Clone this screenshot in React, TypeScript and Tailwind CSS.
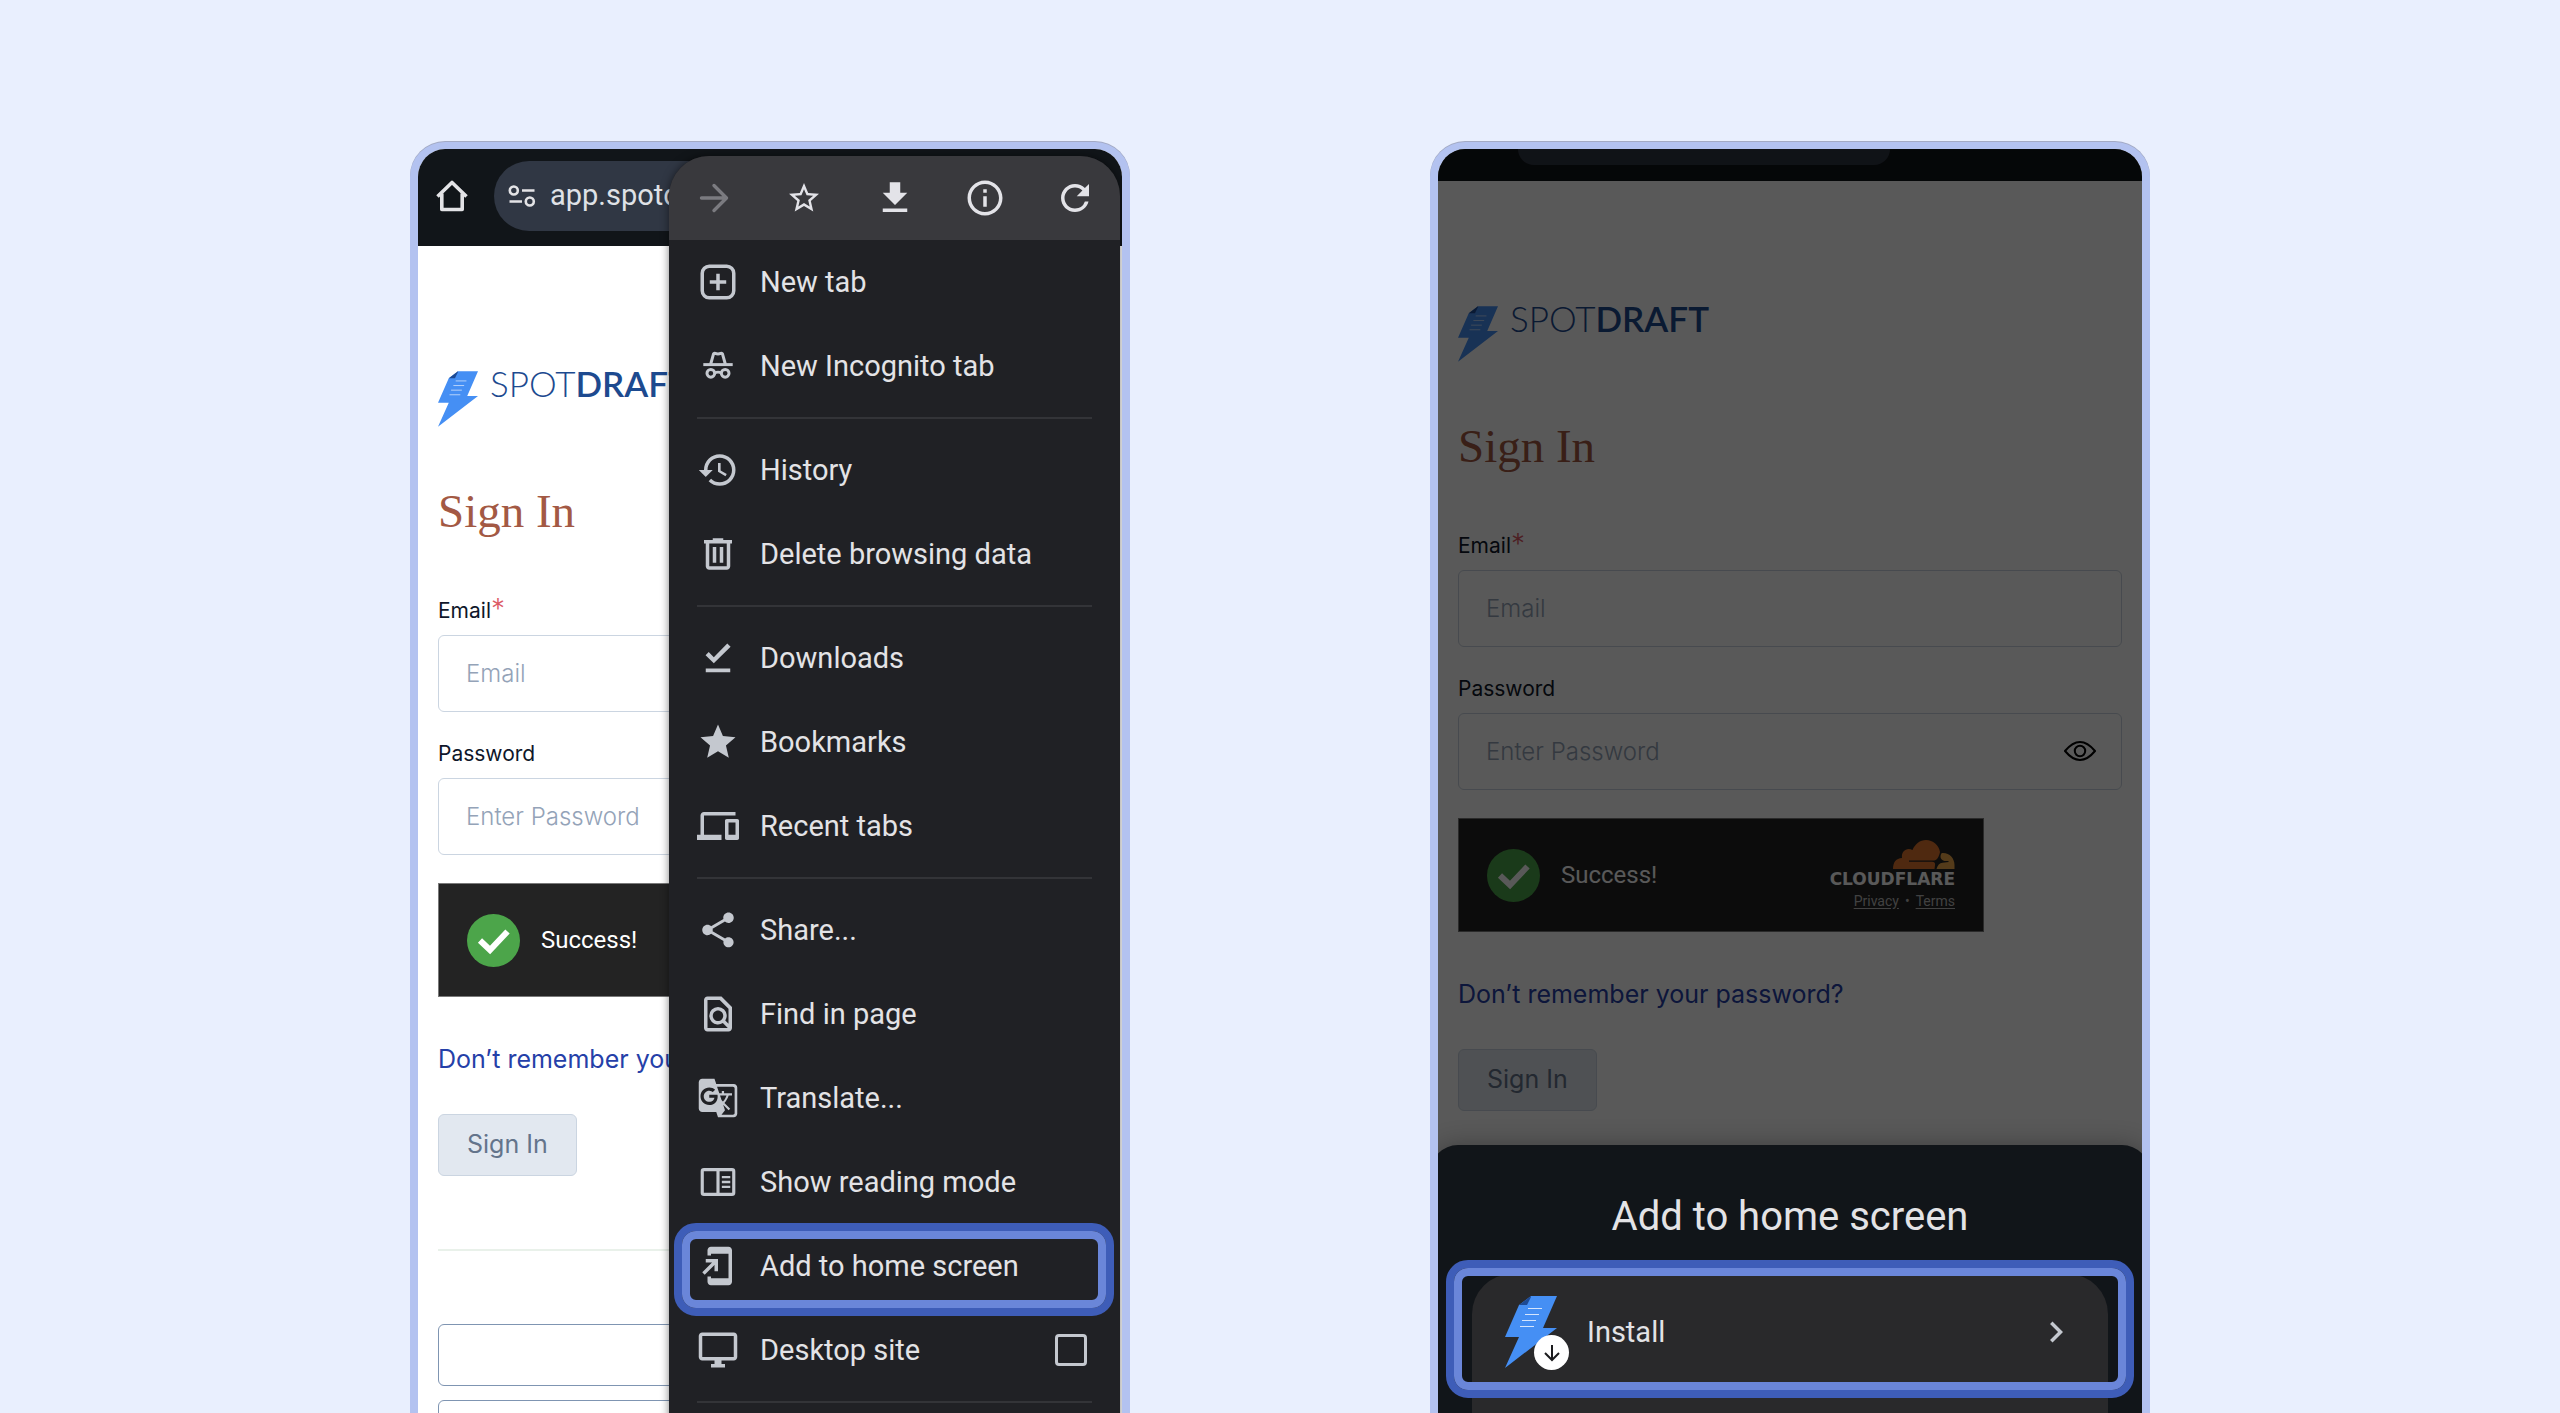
import type { ReactNode } from "react";
import {
  MdAddToHomeScreen,
  MdChevronRight,
  MdDevices,
  MdDownload,
  MdGTranslate,
  MdHistory,
  MdInfoOutline,
  MdOutlineDesktopWindows,
  MdOutlineFindInPage,
  MdRefresh,
  MdShare,
  MdStar,
  MdStarBorder,
} from "react-icons/md";

const HomeIcon = () => (
  <svg viewBox="0 0 32 32" className="size-8" fill="none" stroke="#e3e3e6" strokeWidth="3.6" strokeLinejoin="round">
    <path d="M1.5 16.5 16 2.5l14.500 14" />
    <path d="M5.800 13.500v16h20.400v-16" />
  </svg>
);

const SiteSettingsIcon = () => (
  <svg viewBox="0 0 28 24" className="h-6 w-7" fill="none" stroke="#e3e3e6" strokeWidth="2.600">
    <circle cx="5.800" cy="6.500" r="4" />
    <path d="M14 6.500h12.500M1.500 17.500H14" />
    <circle cx="21.800" cy="17.500" r="4" />
  </svg>
);

const ForwardIcon = () => (
  <svg viewBox="0 0 30 30" className="size-[30px]" fill="none" stroke="#7b7b80" strokeWidth="3.400" strokeLinecap="round" strokeLinejoin="round">
    <path d="M2.500 15h24M15 2.500 27.500 15 15 27.500" />
  </svg>
);

const NewTabIcon = () => (
  <svg viewBox="0 0 24 24" className="size-[42px]" fill="none" stroke="currentColor" strokeWidth="2">
    <rect x="3" y="3" width="18" height="18" rx="4" />
    <path d="M12 7.300v9.400M7.300 12h9.400" />
  </svg>
);

const IncognitoIcon = () => (
  <svg viewBox="0 0 24 24" className="size-[42px]" fill="none" stroke="currentColor" strokeWidth="1.700">
    <path d="M3.600 11.200h16.800" />
    <path d="M7.800 11 9.400 5.300c.1-.5.600-.7 1.100-.5 1 .4 2 .4 3 0 .5-.2 1 0 1.100.5L16.200 11" />
    <circle cx="7.900" cy="16.200" r="2.200" />
    <circle cx="16.100" cy="16.200" r="2.200" />
    <path d="M10 16c1.200-.6 2.800-.6 4 0" />
  </svg>
);

const TrashIcon = () => (
  <svg viewBox="0 0 24 24" className="size-[42px]" fill="currentColor">
    <path d="M15 4V3H9v1H4v2h1v13c0 1.100.9 2 2 2h10c1.100 0 2-.9 2-2V6h1V4h-5zm2 15H7V6h10v13zM9 8h2v9H9zm4 0h2v9h-2z" />
  </svg>
);

const DownloadsIcon = () => (
  <svg viewBox="0 0 24 24" className="size-[42px]" fill="currentColor">
    <path d="M17.300 3.700 19.200 5.500 9.600 15 4.900 10.400 6.700 8.600l2.900 2.900zM5 18h14v2.200H5z" />
  </svg>
);

const ReadingIcon = () => (
  <svg viewBox="0 0 24 24" className="size-[42px]" fill="none" stroke="currentColor" strokeWidth="1.800">
    <rect x="3" y="4.900" width="18" height="14.200" rx="1" />
    <path d="M12 5v14" />
    <path d="M14.200 9.200h4.800M14.200 12h4.800M14.200 14.800h4.800" strokeWidth="1.300" />
  </svg>
);

const Bolt = ({ className }: { className: string }) => (
  <svg viewBox="0 0 52 72" className={className}>
    <path d="M26 0h26L38 32h14L0 72l14-31H0L14 9z" fill="#458ff4" />
    <path d="M26 0v1l-4 8h-8z" fill="#1d4a94" />
    <path d="M23 12.500h14M20 18.500h14M17 24.500h14M15 30.500h14" stroke="#d5e5fd" strokeWidth="1" />
  </svg>
);

const CloudflareMark = () => (
  <svg viewBox="0 0 62 29" className="h-[29px] w-[62px]">
    <path
      d="M0 29c0-7 3-10.500 9-11-1-7 5-11 10.500-8C22 4 27 0 33 0c7 0 13 5 14 12-1 5-3 8-6 8.500H16v1.200h23c2.500 0 3.500 1.500 3 3.500L41.500 29z"
      fill="#e2762e"
    />
    <path d="M48.500 13.200c7.500-1 13 5 13 11.800v4H43.500c1-4 3-6 6-6.300l6-.8v-1h-4c-4-1-5-4-3-7.700z" fill="#efa94b" />
  </svg>
);

const EyeIcon = () => (
  <svg viewBox="0 0 32 20" className="h-5 w-8" fill="none" stroke="#000" strokeWidth="2" strokeLinejoin="round">
    <path d="M1 10C6 4 10.500 1 16 1s10 3 15 9c-5 6-9.500 9-15 9S6 16 1 10z" />
    <circle cx="16" cy="10" r="5.200" />
  </svg>
);

const menuGroups: { label: string; icon: ReactNode; highlighted?: boolean; checkbox?: boolean }[][] = [
  [
    { label: "New tab", icon: <NewTabIcon /> },
    { label: "New Incognito tab", icon: <IncognitoIcon /> },
  ],
  [
    { label: "History", icon: <MdHistory className="size-[42px]" /> },
    { label: "Delete browsing data", icon: <TrashIcon /> },
  ],
  [
    { label: "Downloads", icon: <DownloadsIcon /> },
    { label: "Bookmarks", icon: <MdStar className="size-[42px]" /> },
    { label: "Recent tabs", icon: <MdDevices className="size-[42px]" /> },
  ],
  [
    { label: "Share...", icon: <MdShare className="size-[42px]" /> },
    { label: "Find in page", icon: <MdOutlineFindInPage className="size-[42px]" /> },
    { label: "Translate...", icon: <MdGTranslate className="size-[42px]" /> },
    { label: "Show reading mode", icon: <ReadingIcon /> },
    { label: "Add to home screen", icon: <MdAddToHomeScreen className="size-[42px]" />, highlighted: true },
    { label: "Desktop site", icon: <MdOutlineDesktopWindows className="size-[42px]" />, checkbox: true },
  ],
];

const toolbar = [
  { name: "Forward", icon: <ForwardIcon /> },
  { name: "Bookmark", icon: <MdStarBorder className="size-9" /> },
  { name: "Download", icon: <MdDownload className="size-[42px]" /> },
  { name: "Page info", icon: <MdInfoOutline className="size-[42px]" /> },
  { name: "Reload", icon: <MdRefresh className="size-[42px]" /> },
];

function Highlight({ className }: { className: string }) {
  return (
    <span className={`pointer-events-none absolute rounded-[22px] border-8 border-[#3e5db8] ${className}`}>
      <span className="block size-full rounded-[14px] border-8 border-[#6a86d9]" />
    </span>
  );
}

function Phone({ children }: { children: ReactNode }) {
  return (
    <section className="relative h-full max-w-[720px] flex-1 overflow-hidden rounded-t-[35px] border-x-8 border-t-[7px] border-[#b3c2f0] bg-white shadow-[0_-1px_0_0_#a3aac4]">
      {children}
    </section>
  );
}

function BrowserBar() {
  return (
    <header className="flex h-[97px] items-center bg-[#111519] pr-[248px] pb-1 pl-[18px]">
      <button type="button" aria-label="Home">
        <HomeIcon />
      </button>
      <div className="ml-[26px] flex h-[70px] flex-1 items-center gap-3.5 rounded-full bg-[#303744] pl-3.5">
        <SiteSettingsIcon />
        <span className="text-[29px] text-[#dfe1e6]">app.spotdraft.com</span>
      </div>
    </header>
  );
}

// Lower edge of the bar once the page has been scrolled under it
function ScrolledBar() {
  return (
    <header className="h-8 bg-[#111519] pr-[252px] pl-20">
      <div className="h-4 rounded-b-full bg-[#303744]" />
    </header>
  );
}

function SignInPage({ id }: { id: string }) {
  const fieldClass =
    "h-[77px] w-full rounded-md border border-[#cbd5e1] px-[27px] text-[24px] font-light placeholder:text-[#94a3b8]";
  return (
    <main className="px-5 pt-[125px] font-['Inter',sans-serif] text-[#0f172a]">
      <div className="flex items-start gap-3 font-['Lato',sans-serif] text-[35px] leading-[24px] text-[#1d4a8f]">
        <Bolt className="h-[56px] w-10" />
        <p>
          <span className="font-light">SPOT</span>
          <span className="font-semibold">DRAFT</span>
        </p>
      </div>
      <h1 className="mt-[56px] font-['Liberation_Serif',serif] text-[47px] leading-[56px] text-[#a35944]">Sign In</h1>
      <form>
        <label htmlFor={`${id}-email`} className="mt-[58px] block text-[21px] leading-7">
          Email<span className="align-top text-[28px] leading-6 font-light text-[#dc5a64]">*</span>
        </label>
        <input id={`${id}-email`} type="email" placeholder="Email" className={`mt-2.5 ${fieldClass}`} />
        <label htmlFor={`${id}-password`} className="mt-7 block text-[21px] leading-7">
          Password
        </label>
        <div className="relative mt-2.5">
          <input id={`${id}-password`} type="password" placeholder="Enter Password" className={fieldClass} />
          <button type="button" aria-label="Show password" className="absolute top-7 right-[26px]">
            <EyeIcon />
          </button>
        </div>
        <div className="mt-7 flex h-[114px] w-[526px] items-center border border-[#797979] bg-[#232323] px-7 font-['Roboto',sans-serif] text-white">
          <svg viewBox="0 0 53 53" className="size-[53px]">
            <circle cx="26.500" cy="26.500" r="26.500" fill="#4ca54a" />
            <path d="m13 26.500 10 9.500 17.500-18.500" fill="none" stroke="#fff" strokeWidth="6" />
          </svg>
          <span className="ml-[21px] text-[24px]">Success!</span>
          <div className="ml-auto flex flex-col items-end">
            <CloudflareMark />
            <span className="mt-0.5 font-['DejaVu_Sans',sans-serif] text-[17px] leading-4 font-bold">CLOUDFLARE</span>
            <p className="mt-1 text-[14px] leading-5 text-[#bbb]">
              <a href="#privacy" className="underline underline-offset-2">
                Privacy
              </a>
              <span className="mx-1.5">•</span>
              <a href="#terms" className="underline underline-offset-2">
                Terms
              </a>
            </p>
          </div>
        </div>
        <a href="#reset" className="mt-[46px] block text-[25px] leading-8 text-[#2540a8]">
          Don’t remember your password?
        </a>
        <button
          type="submit"
          className="mt-[39px] h-[62px] rounded-md border border-[#cbd5e1] bg-[#e2e8f0] px-7 text-[25px] text-[#64748b]"
        >
          Sign In
        </button>
      </form>
      <hr className="mt-[73px] border-t-2 border-[#e9f1ea]" />
      <div className="mt-[73px] h-[62px] rounded-md border border-[#7f95b2]" />
      <div className="mt-3.5 h-[62px] rounded-md border border-[#7f95b2]" />
    </main>
  );
}

function BrowserMenu() {
  return (
    <nav className="absolute top-[7px] right-[2px] w-[451px] rounded-t-[40px] bg-[#202125] pb-10 shadow-[0_0_8px_rgba(0,0,0,0.5)]">
      <div className="flex h-[84px] items-center rounded-t-[40px] bg-[#39393d] text-[#e3e3e8]">
        {toolbar.map((item) => (
          <button key={item.name} type="button" aria-label={item.name} className="flex flex-1 justify-center">
            {item.icon}
          </button>
        ))}
      </div>
      {menuGroups.map((group, idx) => (
        <div key={idx}>
          {group.map((item) => {
            const rowClass = "relative flex h-[84px] w-full items-center gap-[21px] pr-[33px] pl-7 text-left";
            const content = (
              <>
                <span className="text-[#c4c8cf]">{item.icon}</span>
                <span className="pt-0.5 text-[29px] text-[#e3e3e6]">{item.label}</span>
              </>
            );
            return item.checkbox ? (
              <label key={item.label} className={rowClass}>
                {content}
                <input
                  type="checkbox"
                  className="ml-auto size-8 appearance-none rounded-[4px] border-[3px] border-[#c4c8cf]"
                />
              </label>
            ) : (
              <button key={item.label} type="button" className={rowClass}>
                {content}
                {item.highlighted && <Highlight className="-top-px right-1.5 -bottom-2 left-[5px] z-10" />}
              </button>
            );
          })}
          <hr className="mx-7 my-[9px] border-t-2 border-[#333438]" />
        </div>
      ))}
    </nav>
  );
}

function InstallSheet() {
  return (
    <div
      role="dialog"
      aria-label="Add to home screen"
      className="absolute inset-x-[-8px] bottom-0 rounded-t-[28px] bg-[#111519] px-[42px] pt-[46px] shadow-[0_0_24px_rgba(0,0,0,0.3)]"
    >
      <h2 className="text-center text-[40px] leading-[52px] text-[#e3e3e6]">Add to home screen</h2>
      <div className="mt-[31px] rounded-t-[40px] bg-[#29292b] pb-[23px]">
        <button type="button" className="relative flex h-[116px] w-full items-center pr-[31px] pl-[33px]">
          <span className="relative">
            <Bolt className="h-[72px] w-[52px]" />
            <span className="absolute -right-3 -bottom-0.5 flex size-[35px] items-center justify-center rounded-full bg-white">
              <svg viewBox="0 0 18 18" className="size-[18px]" fill="none" stroke="#1c1c1e" strokeWidth="2">
                <path d="M9 1v15M2 9l7 7 7-7" />
              </svg>
            </span>
          </span>
          <span className="ml-[30px] pt-0.5 text-[29px] text-[#e3e3e6]">Install</span>
          <MdChevronRight className="ml-auto size-[42px] text-[#c4c8cf]" />
          <Highlight className="-top-3.5 -right-[26px] -bottom-2 -left-[26px]" />
        </button>
      </div>
    </div>
  );
}

export default function App() {
  return (
    <div className="h-screen overflow-hidden bg-[#e9effe] pt-[142px] font-['Roboto',sans-serif]">
      <div className="mx-auto flex h-full max-w-[1740px] justify-between gap-10">
        <Phone>
          <BrowserBar />
          <SignInPage id="menu" />
          <BrowserMenu />
        </Phone>
        <Phone>
          <ScrolledBar />
          <SignInPage id="install" />
          <div className="absolute inset-0 bg-black/65" />
          <InstallSheet />
        </Phone>
      </div>
    </div>
  );
}
